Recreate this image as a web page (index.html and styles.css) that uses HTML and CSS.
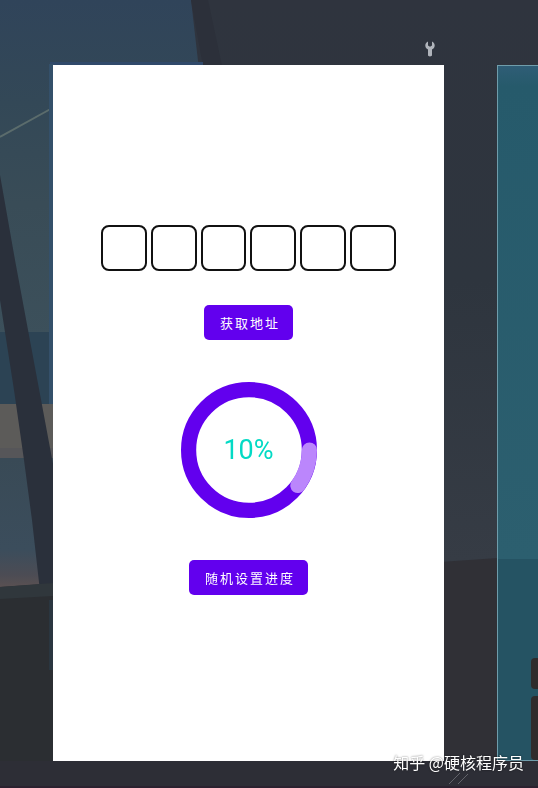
FILE: index.html
```html
<!DOCTYPE html>
<html lang="zh-CN">
<head>
  <meta charset="UTF-8">
  <title>自定义 View 预览</title>
  <meta name="viewport" content="width=device-width, initial-scale=1.0">
  <link rel="stylesheet" href="styles.css">
</head>
<body>
<svg class="scene" viewBox="0 0 538 788" preserveAspectRatio="xMinYMin slice" aria-hidden="true">
  <defs>
    <linearGradient id="sky" x1="0" y1="0" x2="0" y2="1">
      <stop offset="0" stop-color="#30445a"/>
      <stop offset="0.3" stop-color="#334857"/>
      <stop offset="0.6" stop-color="#394c57"/>
      <stop offset="1" stop-color="#3c505b"/>
    </linearGradient>
    <linearGradient id="ground" x1="0" y1="0" x2="0" y2="1">
      <stop offset="0" stop-color="#394a56"/>
      <stop offset="0.7" stop-color="#3b4d5c"/>
      <stop offset="0.9" stop-color="#4c4c54"/>
      <stop offset="1" stop-color="#5b5152"/>
    </linearGradient>
    <linearGradient id="wall" x1="0" y1="0" x2="0" y2="1">
      <stop offset="0" stop-color="#2f343e"/>
      <stop offset="0.5" stop-color="#2e353e"/>
      <stop offset="1" stop-color="#363c45"/>
    </linearGradient>
  </defs>
  <rect width="538" height="562" fill="url(#wall)"/>
  <path d="M0 562L440 562L498 558H538V788H0Z" fill="#303036"/>
  <path d="M0 0H191L230 340H0Z" fill="url(#sky)"/>
  <path d="M0 332H60V406H0Z" fill="#2c4354"/>
  <path d="M0 404H60V448H0Z" fill="#5c5b59"/>
  <path d="M0 448H60V458H0Z" fill="#565659"/>
  <path d="M0 458H60V588H0Z" fill="url(#ground)"/>
  <path d="M0 137L56 106" stroke="#5b6c6c" stroke-width="2"/>
  <path d="M0 175L15 260L28 330L42 405L56 480V600H41L32 520L24 460L14 390L0 300Z" fill="#2a303b"/>
  <path d="M0 587L60 583V788H0Z" fill="#2b2e32"/>
  <path d="M0 587L53 583V596L0 599Z" fill="#30373c"/>
  <path d="M191 0H208L222 66H203Z" fill="#2c303a"/>
  <path d="M50 62H203V66H50Z" fill="#30496a"/>
  <path d="M49 64H54V404H49Z" fill="#34506a"/>
  <path d="M49 600H54V670H49Z" fill="#2a3640"/>
  <path d="M0 761H538V788H0Z" fill="#2d2e36"/>
  <path d="M0 786H538V788H0Z" fill="#2b2230"/>
  <path d="M449 784L460 773M458 784L468 774" stroke="#62636a" stroke-width="1"/>
</svg>
<div class="editor">
  <div class="toolbar">
    <button class="tool" aria-label="工具">
      <svg viewBox="0 0 10 16" aria-hidden="true">
        <path d="M3 0.6C1.2 1.4 0.3 2.8 0.3 4.6C0.3 6.4 1.4 7.9 3 8.6V14C3 15 3.8 15.4 5 15.4S7 15 7 14V8.6C8.6 7.9 9.7 6.4 9.7 4.6C9.7 2.8 8.8 1.4 7 0.6V4.6L5 5.8L3 4.6Z" fill="#b0b4bb"/>
      </svg>
    </button>
  </div>
  <main class="phone">
    <div class="code">
      <input type="text" maxlength="1" aria-label="第 1 位">
      <input type="text" maxlength="1" aria-label="第 2 位">
      <input type="text" maxlength="1" aria-label="第 3 位">
      <input type="text" maxlength="1" aria-label="第 4 位">
      <input type="text" maxlength="1" aria-label="第 5 位">
      <input type="text" maxlength="1" aria-label="第 6 位">
    </div>
    <button class="btn">获取地址</button>
    <div class="progress">
      <svg viewBox="0 0 136 136" aria-hidden="true">
        <circle cx="68" cy="68" r="60.4" fill="none" stroke="#6200ee" stroke-width="15.2"/>
        <path d="M128.4 68A60.4 60.4 0 0 1 116.9 103.5" fill="none" stroke="#bb86fc" stroke-width="15.2" stroke-linecap="round"/>
      </svg>
      <span>10%</span>
    </div>
    <button class="btn">随机设置进度</button>
  </main>
  <aside class="blueprint">
    <div class="block"></div>
    <div class="block tall"></div>
  </aside>
</div>
<div class="watermark">知乎 @硬核程序员</div>
</body>
</html>
```

FILE: styles.css
```css
* {
  box-sizing: border-box;
}
body {
  margin: 0;
  background: #2e333c;
  font-family: Roboto, "Noto Sans CJK SC", sans-serif;
  overflow-x: hidden;
}
.scene {
  position: fixed;
  top: 0;
  left: 0;
  width: 100%;
  height: 100%;
  z-index: -1;
}
.editor {
  display: grid;
  grid-template-columns: minmax(0, 1fr) 41px;
  grid-template-rows: 65px 1fr;
  column-gap: 53px;
  min-height: 100vh;
  padding: 0 0 27px 53px;
}
.toolbar {
  display: flex;
  justify-content: flex-end;
  align-items: flex-end;
  padding: 8px;
}
.tool {
  width: 12px;
  height: 16px;
  padding: 0 1px;
  border: none;
  background: none;
  cursor: pointer;
}
.tool svg {
  display: block;
  width: 10px;
  height: 16px;
}
.phone {
  grid-row: 2;
  display: flex;
  flex-direction: column;
  align-items: center;
  padding: 160px 16px;
  background: #fff;
}
.code {
  display: grid;
  grid-template-columns: repeat(6, 1fr);
  gap: 4px;
  width: 100%;
  max-width: 295px;
  margin-bottom: 34px;
}
.code input {
  width: 100%;
  height: 46px;
  padding: 0;
  border: 2px solid #111;
  border-radius: 8px;
  background: #fff;
  font-size: 20px;
  text-align: center;
}
.btn {
  height: 35px;
  padding: 0 13px 0 16px;
  border: none;
  border-radius: 5px;
  background: #6200ee;
  color: #fff;
  font-family: inherit;
  font-size: 13px;
  letter-spacing: 2px;
  cursor: pointer;
}
.progress {
  display: grid;
  place-items: center;
  width: 136px;
  height: 136px;
  margin: 42px 0;
}
.progress svg,
.progress span {
  grid-area: 1 / 1;
}
.progress span {
  color: #03dac5;
  font-size: 27px;
}
.blueprint {
  grid-row: 2;
  display: flex;
  flex-direction: column;
  justify-content: flex-end;
  align-items: flex-end;
  gap: 7px;
  border: 1px solid #6f9dab;
  border-right: none;
  background: linear-gradient(#2f5d76, #265a6b 20px, #2c5f6f 71%, #255363 71%);
}
.block {
  width: 7px;
  height: 31px;
  border-radius: 4px 0 0 4px;
  background: #2f2c2d;
}
.tall {
  height: 64px;
}
.watermark {
  position: fixed;
  right: 14px;
  bottom: 14px;
  color: #fff;
  font-family: "Noto Sans CJK SC", sans-serif;
  font-size: 16px;
  text-shadow: 0 0 2px rgba(0, 0, 0, 0.6);
}
```
